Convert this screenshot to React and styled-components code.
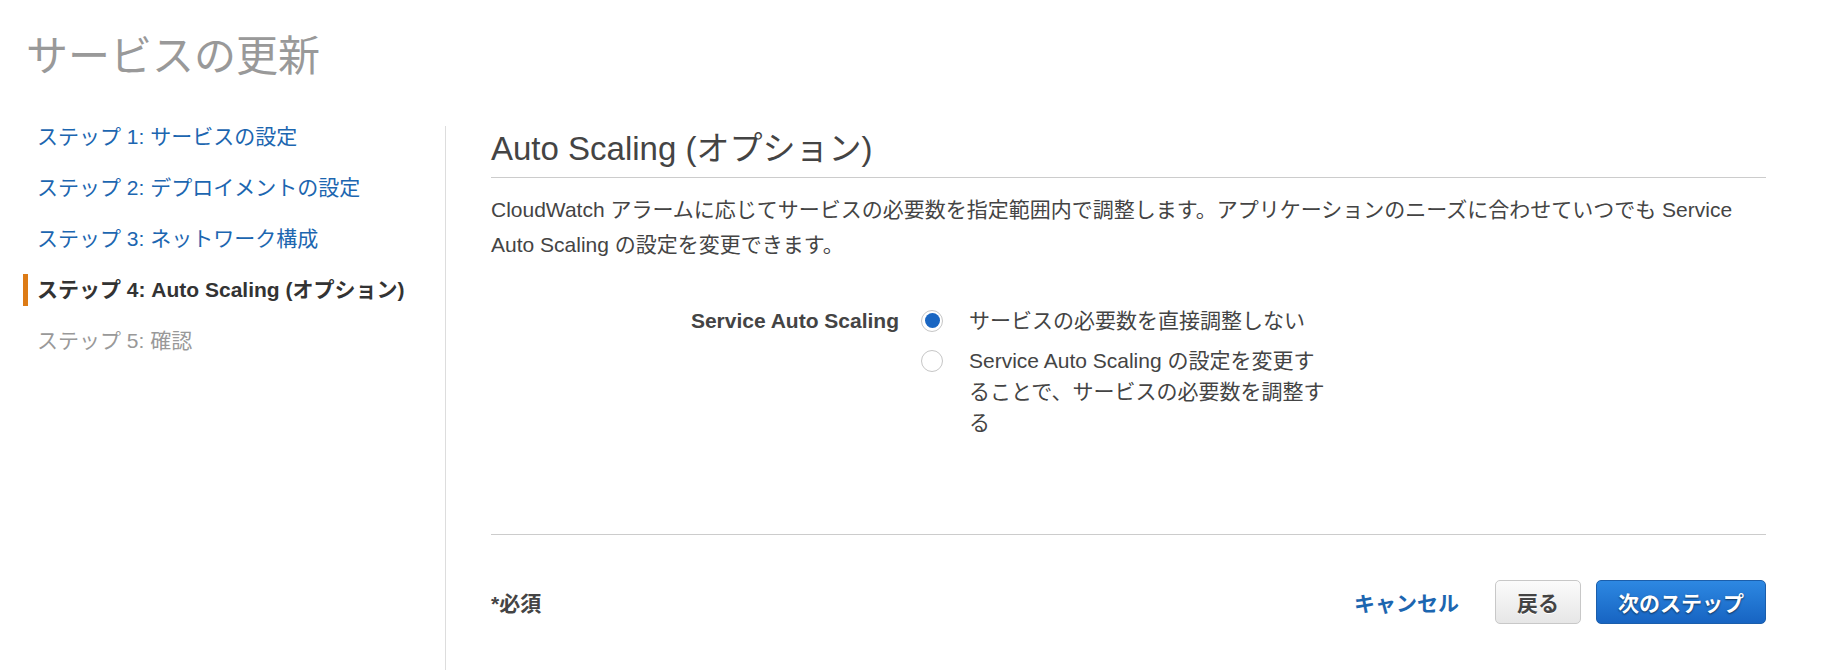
import React, { useState } from 'react';
import styled, { createGlobalStyle } from 'styled-components';

const GlobalStyle = createGlobalStyle`
  body {
    margin: 0;
    background: #fff;
    font-family: "Liberation Sans", "Noto Sans CJK JP", sans-serif;
    color: #444;
  }
`;

const Page = styled.div`
  width: 1830px;
  height: 670px;
  overflow: hidden;
`;

const Title = styled.h1`
  margin: 0;
  padding: 29px 0 0 26px;
  font-size: 42px;
  line-height: 56px;
  font-weight: normal;
  color: #999;
`;

const Body = styled.div`
  display: flex;
  margin-top: 36px;
  height: 549px;
`;

const Sidebar = styled.nav`
  width: 445px;
  flex-shrink: 0;
  display: flex;
  flex-direction: column;
  gap: 19px;
`;

const Step = styled.a`
  display: block;
  height: 32px;
  line-height: 32px;
  margin-left: 23px;
  padding-left: 9px;
  border-left: 5px solid ${(p) => (p.$active ? '#dd7b15' : 'transparent')};
  font-size: 21px;
  font-weight: ${(p) => (p.$active ? 'bold' : 'normal')};
  color: ${(p) => (p.$active ? '#333' : p.$disabled ? '#999' : '#1c66b0')};
  text-decoration: none;
  cursor: ${(p) => (p.$disabled ? 'default' : 'pointer')};
  white-space: nowrap;
`;

const Main = styled.main`
  flex: 1;
  margin-top: 5px;
  border-left: 1px solid #ddd;
  padding: 3px 64px 0 45px;
  display: flex;
  flex-direction: column;
`;

const Heading = styled.h2`
  margin: 0;
  padding-bottom: 8px;
  border-bottom: 1px solid #ccc;
  font-size: 33px;
  line-height: 40px;
  font-weight: normal;
  color: #444;
`;

const Description = styled.p`
  margin: 14px 0 0;
  font-size: 21px;
  line-height: 35px;
  color: #444;
`;

const FormRow = styled.div`
  display: flex;
  align-items: flex-start;
  gap: 22px;
  margin-top: 43px;
`;

const FieldLabel = styled.div`
  width: 408px;
  text-align: right;
  font-size: 21px;
  line-height: 31px;
  font-weight: bold;
  color: #444;
`;

const Options = styled.div`
  display: flex;
  flex-direction: column;
  gap: 9px;
`;

const Option = styled.label`
  display: flex;
  align-items: flex-start;
  gap: 26px;
  cursor: pointer;
`;

const Radio = styled.span`
  width: 22px;
  height: 22px;
  margin-top: 4.5px;
  box-sizing: border-box;
  border: 1px solid #c6c6c6;
  border-radius: 50%;
  background: #fff;
  flex-shrink: 0;
  display: grid;
  place-items: center;

  &::after {
    content: '';
    width: 15px;
    height: 15px;
    border-radius: 50%;
    background: ${(p) => (p.$checked ? '#1a66c2' : 'transparent')};
  }
`;

const OptionText = styled.span`
  width: 364px;
  font-size: 21px;
  line-height: 31px;
  color: #444;
`;

const Footer = styled.div`
  margin-top: 96px;
  border-top: 1px solid #ccc;
  padding-top: 45px;
  display: flex;
  align-items: center;
`;

const Required = styled.div`
  flex: 1;
  font-size: 21px;
  font-weight: bold;
  color: #444;
`;

const Cancel = styled.a`
  font-size: 21px;
  font-weight: bold;
  color: #1c66b0;
  margin-right: 36px;
  cursor: pointer;
`;

const Button = styled.button`
  height: 44px;
  padding: 0 21px;
  border-radius: 5px;
  font-family: inherit;
  font-size: 21px;
  font-weight: bold;
  cursor: pointer;
  border: 1px solid ${(p) => (p.$primary ? '#1b5eab' : '#c8c8c8')};
  color: ${(p) => (p.$primary ? '#fff' : '#444')};
  background: ${(p) =>
    p.$primary
      ? 'linear-gradient(to bottom, #2d88e2, #1764c2)'
      : 'linear-gradient(to bottom, #fbfbfb, #e6e6e6)'};
  text-shadow: ${(p) => (p.$primary ? '0 1px 2px rgba(0,0,0,0.6)' : '0 1px 0 #fff')};

  & + & {
    margin-left: 15px;
  }
`;

const steps = [
  { label: 'ステップ 1: サービスの設定' },
  { label: 'ステップ 2: デプロイメントの設定' },
  { label: 'ステップ 3: ネットワーク構成' },
  { label: 'ステップ 4: Auto Scaling (オプション)', active: true },
  { label: 'ステップ 5: 確認', disabled: true },
];

const options = [
  'サービスの必要数を直接調整しない',
  'Service Auto Scaling の設定を変更することで、サービスの必要数を調整する',
];

export default function App() {
  const [selected, setSelected] = useState(0);

  return (
    <Page>
      <GlobalStyle />
      <Title>サービスの更新</Title>
      <Body>
        <Sidebar>
          {steps.map((s, idx) => (
            <Step key={idx} $active={s.active} $disabled={s.disabled}>
              {s.label}
            </Step>
          ))}
        </Sidebar>
        <Main>
          <Heading>Auto Scaling (オプション)</Heading>
          <Description>
            CloudWatch アラームに応じてサービスの必要数を指定範囲内で調整します。アプリケーションのニーズに合わせていつでも Service Auto Scaling の設定を変更できます。
          </Description>
          <FormRow>
            <FieldLabel>Service Auto Scaling</FieldLabel>
            <Options>
              {options.map((text, idx) => (
                <Option key={idx} onClick={() => setSelected(idx)}>
                  <Radio $checked={selected === idx} />
                  <OptionText>{text}</OptionText>
                </Option>
              ))}
            </Options>
          </FormRow>
          <Footer>
            <Required>*必須</Required>
            <Cancel>キャンセル</Cancel>
            <Button>戻る</Button>
            <Button $primary>次のステップ</Button>
          </Footer>
        </Main>
      </Body>
    </Page>
  );
}
